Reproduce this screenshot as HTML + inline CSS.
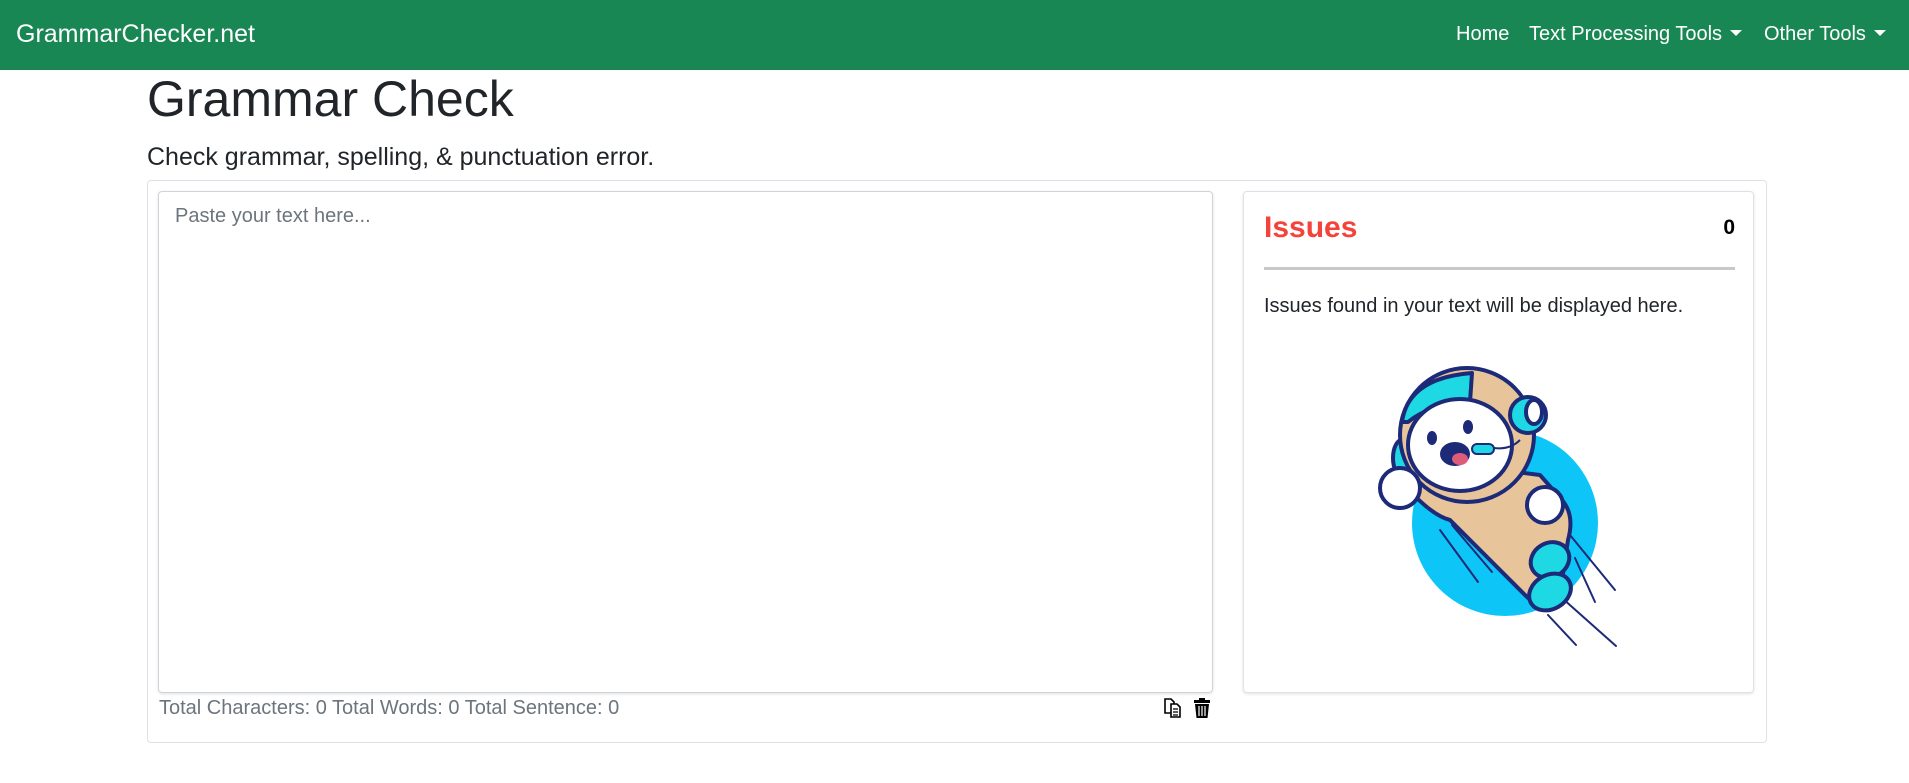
<!DOCTYPE html>
<html><head><meta charset="utf-8"><style>
*{box-sizing:border-box;margin:0;padding:0}
body{width:1909px;height:783px;background:#fff;font-family:"Liberation Sans",sans-serif;color:#212529;position:relative;overflow:hidden}
.nav{position:absolute;left:0;top:0;width:1909px;height:70px;background:#198754}
.nav .brand{position:absolute;left:16px;top:20px;font-size:25px;color:#fff}
.nav .lk{position:absolute;top:23px;font-size:20px;color:#fff}
.caret{display:inline-block;width:0;height:0;border-left:6px solid transparent;border-right:6px solid transparent;border-top:6px solid #fff;vertical-align:middle;margin-left:8px;position:relative;top:-2px}
h1{position:absolute;left:147px;top:72px;font-size:50px;font-weight:400;line-height:1.1}
.sub{position:absolute;left:147px;top:143px;font-size:25px}
.outer{position:absolute;left:147px;top:180px;width:1620px;height:563px;border:1px solid #dee2e6;border-radius:4px}
.ta{position:absolute;left:158px;top:191px;width:1055px;height:502px;border:1px solid #ced4da;border-radius:4px;box-shadow:0 1px 3px rgba(0,0,0,.12)}
.ta span{position:absolute;left:16px;top:13px;font-size:20px;color:#6c757d}
.card{position:absolute;left:1243px;top:191px;width:511px;height:502px;border:1px solid #dee2e6;border-radius:4px;box-shadow:0 1px 3px rgba(0,0,0,.12)}
.iss{position:absolute;left:20px;top:19px;font-size:30px;font-weight:700;color:#f4433a}
.cnt{position:absolute;right:18px;top:24px;font-size:21px;font-weight:700;color:#000}
.hr{position:absolute;left:20px;right:18px;top:75px;height:3px;background:#c8c8c8}
.msg{position:absolute;left:20px;top:103px;font-size:20px}
.foot{position:absolute;left:159px;top:697px;font-size:20px;color:#6c757d}
</style></head><body>
<div class="nav"><span class="brand">GrammarChecker.net</span>
<span class="lk" style="left:1456px">Home</span>
<span class="lk" style="left:1529px">Text Processing Tools<span class="caret"></span></span>
<span class="lk" style="left:1764px">Other Tools<span class="caret"></span></span></div>
<h1>Grammar Check</h1>
<div class="sub">Check grammar, spelling, &amp; punctuation error.</div>
<div class="outer"></div>
<div class="ta"><span>Paste your text here...</span></div>
<div class="card"><div class="iss">Issues</div><div class="cnt">0</div><div class="hr"></div><div class="msg">Issues found in your text will be displayed here.</div></div>
<svg style="position:absolute;left:1300px;top:340px" width="380" height="320" viewBox="0 0 380 320">
<circle cx="205" cy="183" r="93" fill="#0dc6f7"/>
<g stroke="#1c2a78" stroke-width="2" stroke-linecap="round">
<line x1="140" y1="190" x2="178" y2="242"/><line x1="152" y1="185" x2="192" y2="232"/>
<line x1="270" y1="195" x2="315" y2="250"/><line x1="275" y1="218" x2="295" y2="262"/>
<line x1="262" y1="258" x2="316" y2="306"/><line x1="248" y1="275" x2="276" y2="305"/></g>
<g stroke="#1c2a78" stroke-width="4" stroke-linejoin="round">
<path d="M100 140 Q130 175 150 180 L228 258 Q255 262 262 240 L268 200 Q275 175 262 160 L240 135 L200 130 Z" fill="#e8c49a"/>
<circle cx="245" cy="165" r="18" fill="#fff"/>
<ellipse cx="250" cy="220" rx="20" ry="17" fill="#1ed8e4" transform="rotate(-30 250 220)"/>
<ellipse cx="250" cy="252" rx="22" ry="17" fill="#1ed8e4" transform="rotate(-30 250 252)"/>
<ellipse cx="102" cy="118" rx="9" ry="18" fill="#1ed8e4"/>
<circle cx="167" cy="95" r="67" fill="#e8c49a"/>
<path d="M102 82 Q108 38 172 33 L170 62 Q130 64 108 82 Z" fill="#1ed8e4"/>
<ellipse cx="160" cy="105" rx="52" ry="46" fill="#fff"/>
<circle cx="228" cy="75" r="18" fill="#1ed8e4"/>
<ellipse cx="234" cy="72" rx="8" ry="12" fill="#fff"/>
<circle cx="100" cy="148" r="20" fill="#fff"/>
</g>
<ellipse cx="132" cy="98" rx="5" ry="7" fill="#1c2a78"/>
<ellipse cx="168" cy="87" rx="5" ry="7" fill="#1c2a78"/>
<ellipse cx="155" cy="114" rx="15" ry="12" fill="#1c2a78"/>
<ellipse cx="160" cy="119" rx="8" ry="6" fill="#e05a7a"/>
<rect x="172" y="104" width="22" height="10" rx="5" fill="#1ed8e4" stroke="#1c2a78" stroke-width="2"/>
<path d="M194 108 Q210 110 220 100" stroke="#1c2a78" stroke-width="2" fill="none"/>
</svg>
<div class="foot">Total Characters: 0 Total Words: 0 Total Sentence: 0</div>
<svg style="position:absolute;left:1162px;top:697px" width="22" height="22" viewBox="0 0 22 22" fill="none" stroke="#000" stroke-width="1.6">
<path d="M3 2h6l3 3v11H3z"/><path d="M9 7h6l3 3v10H9z" fill="#fff"/><path d="M11 12h5M11 15h5M11 18h5" stroke-width="1.2"/></svg>
<svg style="position:absolute;left:1192px;top:697px" width="20" height="22" viewBox="0 0 20 22">
<rect x="2" y="3" width="16" height="3" fill="#000"/><rect x="7" y="1" width="6" height="3" fill="#000"/>
<path d="M3 7h14l-1.5 14h-11z" fill="#000"/><path d="M7 9v10M10 9v10M13 9v10" stroke="#fff" stroke-width="1.2"/></svg>
</body></html>
